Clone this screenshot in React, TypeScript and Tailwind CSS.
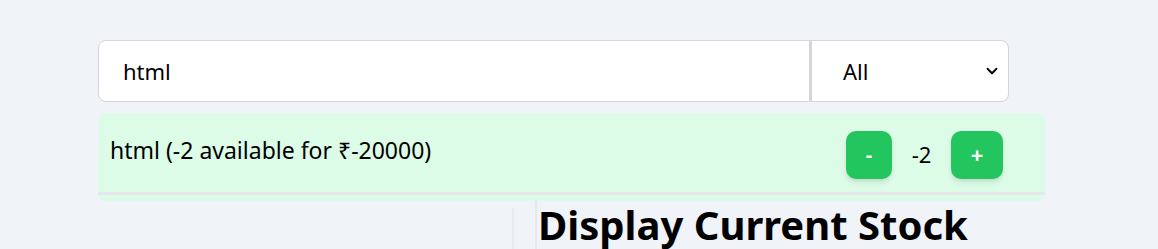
import { ChevronDown } from "lucide-react";

export default function App() {
  return (
    <div className="min-h-[249px] overflow-hidden bg-[#f0f3f8] font-['Noto_Sans',sans-serif] text-black">
      <div className="pl-[98px] pr-[113px] pt-[40px]">
        <div className="flex h-[62px] w-[911px]">
          <div className="flex flex-1 items-center rounded-l-lg border border-[#d4d6dc] bg-white pl-[24px] text-[22px]">
            html
          </div>
          <div className="flex w-[199px] items-center justify-between rounded-r-lg border border-l-2 border-[#d4d6dc] bg-white pl-[31px] pr-[7px] text-[22px]">
            <span>All</span>
            <ChevronDown size={18} strokeWidth={2.5} />
          </div>
        </div>

        <div className="mt-[11px] rounded-lg bg-[#dcfce7] pb-[6px]">
          <div className="flex h-[82px] items-center justify-between border-b-[3px] border-[#e5e7eb] pl-[12px] pr-[42px]">
            <span className="-mt-[4px] text-[23px]">html (-2 available for ₹-20000)</span>
            <div className="mt-[4px] flex items-center">
              <button className="h-[48px] w-[46px] rounded-[10px] bg-[#22c55e] text-[20px] font-bold text-white shadow-md">
                -
              </button>
              <span className="w-[59px] text-center text-[22px]">-2</span>
              <button className="h-[48px] w-[52px] rounded-[10px] bg-[#22c55e] text-[22px] font-bold text-white shadow-md">
                +
              </button>
            </div>
          </div>
        </div>
      </div>

      <div className="mt-[7px] flex">
        <div className="w-[512px]" />
        <div className="flex flex-1 border-l-2 border-[#e9ecf1]">
          <div className="w-[21px]" />
          <h1 className="-mt-[7px] border-l-2 border-[#e4e7ec] pl-[1px] text-[40px] font-bold leading-[48px]">
            Display Current Stock
          </h1>
        </div>
      </div>
    </div>
  );
}
